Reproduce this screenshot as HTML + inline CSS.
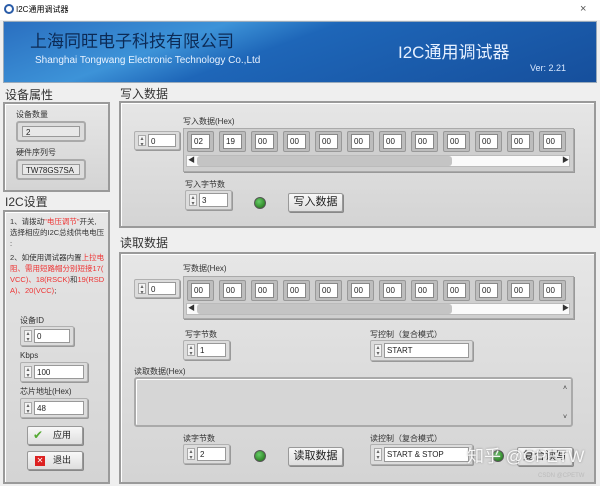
<!DOCTYPE html>
<html><head><meta charset="utf-8"><style>
*{margin:0;padding:0;box-sizing:border-box}
body{width:600px;height:486px;background:#efefef;position:relative;overflow:hidden;font-family:"Liberation Sans","Noto Sans CJK SC",sans-serif;color:#222}
.a{position:absolute}
.t{position:absolute;font-size:8px;color:#333;white-space:nowrap;line-height:1}
.h{position:absolute;font-size:12px;color:#333;white-space:nowrap;line-height:1}
.grp{position:absolute;border:2px solid #9a9a9a;background:linear-gradient(#e6e6e6,#d4d4d4);box-shadow:inset 1px 1px 0 #fff}
.num{position:absolute;background:#dcdcdc;border:1px solid #b0b0b0;border-radius:2px;box-shadow:1px 1px 0 #999;z-index:2}
.num .sp{position:absolute;left:3px;top:3px;width:8px;bottom:3px;background:#f4f4f4;border:1px solid #aaa;font-size:6px;line-height:6px;text-align:center;color:#666}
.num .v{position:absolute;left:13px;top:2px;right:3px;bottom:2px;background:#fff;border:1px solid #999;font-size:8px;padding-left:2px;line-height:14px}
.arr{position:absolute;background:#cfcfcf;border:1px solid #aaa;box-shadow:1px 1px 0 #999}
.c{position:absolute;width:27px;height:21px;background:#bdbdbd;border:1px solid #999;border-radius:2px;z-index:3}
.c span{position:absolute;left:3px;top:2px;right:3px;bottom:2px;background:#fff;border:1px solid #888;font-size:8px;padding-left:2px;line-height:14px}
.sb{position:absolute;height:12px;background:#fafafa;border:1px solid #bbb}
.btn{position:absolute;background:linear-gradient(#f8f8f8,#dedede);border:1px solid #999;border-radius:2px;font-size:11px;text-align:center;box-shadow:1px 1px 0 #888}
.led{position:absolute;width:12px;height:12px;border-radius:50%;background:radial-gradient(circle at 40% 35%,#6c6,#1a6a10);border:1px solid #555}
.box{position:absolute;background:#dcdcdc;border:2px solid #aaa;border-radius:3px}
.box span{position:absolute;left:4px;top:3px;right:4px;bottom:3px;background:#e8e8e8;border:1px solid #999;font-size:8px;padding-left:3px;line-height:12px}
.p{position:absolute;font-size:7.5px;color:#333;line-height:11px;width:100px;white-space:nowrap}
.r{color:#e33}
</style></head><body>
<div class="a" style="left:0;top:0;width:600px;height:20px;background:#fff"></div>
<div class="a" style="left:4px;top:4px;width:10px;height:10px;border-radius:50%;border:2px solid #2a5ca8"></div>
<div class="t" style="left:16px;top:6px;color:#000">I2C通用调试器</div>
<div class="t" style="left:580px;top:4px;font-size:11px;color:#555">×</div>
<div class="a" style="left:3px;top:21px;width:594px;height:62px;background:linear-gradient(160deg,#2a6fc0 0%,#3d93d8 30%,#1e66b8 45%,#164f9c 100%);border:1px solid #9ab"></div>
<div class="a" style="left:30px;top:33px;font-size:17px;line-height:1;color:#0c2a55;white-space:nowrap">上海同旺电子科技有限公司</div>
<div class="a" style="left:35px;top:56px;font-size:10px;line-height:1;color:#e8f2ff;white-space:nowrap">Shanghai Tongwang Electronic Technology Co.,Ltd</div>
<div class="a" style="left:398px;top:44px;font-size:17px;line-height:1;color:#e6f0ff;white-space:nowrap">I2C通用调试器</div>
<div class="a" style="left:530px;top:64px;font-size:9px;line-height:1;color:#d8e8ff">Ver:  2.21</div>

<div class="h" style="left:5px;top:89px">设备属性</div>
<div class="grp" style="left:3px;top:102px;width:107px;height:90px"></div>
<div class="t" style="left:16px;top:111px">设备数量</div>
<div class="box" style="left:16px;top:121px;width:70px;height:21px"><span>2</span></div>
<div class="t" style="left:16px;top:149px">硬件序列号</div>
<div class="box" style="left:16px;top:159px;width:70px;height:21px"><span>TW78GS7SA</span></div>
<div class="h" style="left:5px;top:196px">I2C设置</div>
<div class="grp" style="left:3px;top:210px;width:107px;height:274px"></div>
<div class="p" style="left:10px;top:216px">1、请拨动<span class="r">"电压调节"</span>开关,<br>选择相应的I2C总线供电电压<br>:</div>
<div class="p" style="left:10px;top:252px">2、如使用调试器内置<span class="r">上拉电</span><br><span class="r">阻、需用短路帽分别短接17(</span><br><span class="r">VCC)、18(RSCK)</span>和<span class="r">19(RSD</span><br><span class="r">A)、20(VCC)</span>;</div>
<div class="t" style="left:20px;top:317px">设备ID</div>
<div class="num" style="left:20px;top:326px;width:54px;height:20px"><div class="sp">▴<br>▾</div><div class="v">0</div></div>
<div class="t" style="left:20px;top:352px">Kbps</div>
<div class="num" style="left:20px;top:362px;width:68px;height:20px"><div class="sp">▴<br>▾</div><div class="v">100</div></div>
<div class="t" style="left:20px;top:388px">芯片地址(Hex)</div>
<div class="num" style="left:20px;top:398px;width:68px;height:20px"><div class="sp">▴<br>▾</div><div class="v">48</div></div>
<div class="btn" style="left:27px;top:426px;width:56px;height:19px;font-size:9px;line-height:17px;padding-left:14px"><span style="position:absolute;left:5px;color:#5a3;font-size:12px;line-height:16px">✔</span>应用</div>
<div class="btn" style="left:27px;top:451px;width:56px;height:19px;font-size:9px;line-height:17px;padding-left:14px"><span style="position:absolute;left:7px;top:4px;width:10px;height:10px;background:#d22;color:#fff;font-size:8px;line-height:10px">✕</span>退出</div>

<div class="h" style="left:120px;top:88px">写入数据</div>
<div class="grp" style="left:119px;top:101px;width:477px;height:127px"></div>
<div class="t" style="left:183px;top:118px">写入数据(Hex)</div>
<div class="num" style="left:134px;top:131px;width:46px;height:19px"><div class="sp">▴<br>▾</div><div class="v">0</div></div>
<div class="arr" style="left:183px;top:128px;width:391px;height:44px"></div>
<div class="sb" style="left:186px;top:155px;width:384px"></div>
<div class="a" style="left:197px;top:156px;width:255px;height:10px;background:#c4c4c4;border-radius:3px"></div>
<div class="t" style="left:188px;top:157px;font-size:7px">◀</div><div class="t" style="left:562px;top:157px;font-size:7px">▶</div>
<div class="t" style="left:185px;top:181px">写入字节数</div>
<div class="num" style="left:185px;top:190px;width:47px;height:20px"><div class="sp">▴<br>▾</div><div class="v">3</div></div>
<div class="led" style="left:254px;top:197px"></div>
<div class="btn" style="left:288px;top:193px;width:55px;height:19px;line-height:17px">写入数据</div>

<div class="h" style="left:120px;top:237px">读取数据</div>
<div class="grp" style="left:119px;top:252px;width:477px;height:232px"></div>
<div class="t" style="left:183px;top:265px">写数据(Hex)</div>
<div class="num" style="left:134px;top:279px;width:46px;height:19px"><div class="sp">▴<br>▾</div><div class="v">0</div></div>
<div class="arr" style="left:183px;top:276px;width:391px;height:43px"></div>
<div class="sb" style="left:186px;top:303px;width:384px"></div>
<div class="a" style="left:197px;top:304px;width:255px;height:10px;background:#c4c4c4;border-radius:3px"></div>
<div class="t" style="left:188px;top:305px;font-size:7px">◀</div><div class="t" style="left:562px;top:305px;font-size:7px">▶</div>
<div class="t" style="left:185px;top:331px">写字节数</div>
<div class="num" style="left:183px;top:340px;width:47px;height:20px"><div class="sp">▴<br>▾</div><div class="v">1</div></div>
<div class="t" style="left:370px;top:331px">写控制（复合模式）</div>
<div class="num" style="left:370px;top:340px;width:103px;height:21px"><div class="sp">▴<br>▾</div><div class="v">START</div></div>
<div class="t" style="left:134px;top:368px">读取数据(Hex)</div>
<div class="a" style="left:134px;top:377px;width:439px;height:50px;background:#d6d6d6;border:2px solid #aaa;border-radius:3px;box-shadow:inset 1px 1px 0 #fff"></div>
<div class="t" style="left:563px;top:385px;font-size:7px">˄</div><div class="t" style="left:563px;top:414px;font-size:7px">˅</div>
<div class="t" style="left:183px;top:435px">读字节数</div>
<div class="num" style="left:183px;top:444px;width:47px;height:20px"><div class="sp">▴<br>▾</div><div class="v">2</div></div>
<div class="led" style="left:254px;top:450px"></div>
<div class="btn" style="left:288px;top:447px;width:55px;height:19px;line-height:17px">读取数据</div>
<div class="t" style="left:370px;top:435px">读控制（复合模式）</div>
<div class="num" style="left:370px;top:444px;width:103px;height:21px"><div class="sp">▴<br>▾</div><div class="v">START &amp; STOP</div></div>
<div class="led" style="left:492px;top:450px"></div>
<div class="btn" style="left:517px;top:447px;width:56px;height:19px;line-height:17px">复合读写</div>
<div class="a" style="left:467px;top:448px;font-size:17px;line-height:1;color:rgba(255,255,255,.9);white-space:nowrap;text-shadow:0 0 2px #888;z-index:5">知乎 @CPETW</div>
<div class="a" style="left:538px;top:473px;font-size:6px;line-height:1;color:#bbb">CSDN @CPETW</div>
<script>
var w=['02','19','00','00','00','00','00','00','00','00','00','00'];
for(var i=0;i<12;i++){var x=187+i*32;
document.body.insertAdjacentHTML('beforeend','<div class="c" style="left:'+x+'px;top:131px"><span>'+w[i]+'</span></div><div class="c" style="left:'+x+'px;top:280px"><span>00</span></div>');}
</script>
</body></html>
